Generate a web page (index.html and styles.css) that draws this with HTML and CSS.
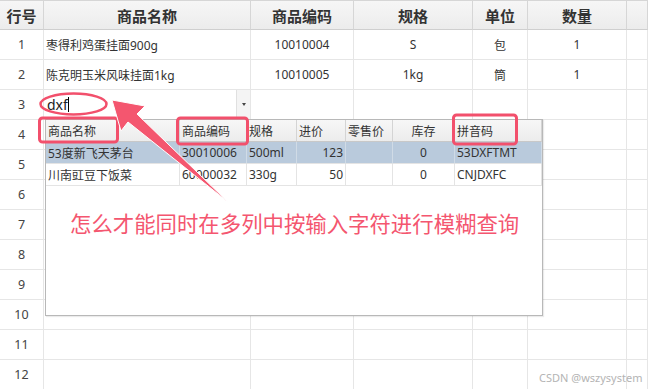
FILE: index.html
```html
<!DOCTYPE html>
<html>
<head lang="zh">
    <meta charset="UTF-8">
    <title>商品明细</title>
    <link rel="stylesheet" href="styles.css">
</head>
<body>
<div class="page">
    <div class="grid">
        <div class="c h">行号</div>
        <div class="c h">商品名称</div>
        <div class="c h">商品编码</div>
        <div class="c h">规格</div>
        <div class="c h">单位</div>
        <div class="c h">数量</div>
        <div class="c h"></div>

        <div class="c n">1</div>
        <div class="c l">枣得利鸡蛋挂面900g</div>
        <div class="c">10010004</div>
        <div class="c">S</div>
        <div class="c">包</div>
        <div class="c">1</div>
        <div class="c"></div>

        <div class="c n">2</div>
        <div class="c l">陈克明玉米风味挂面1kg</div>
        <div class="c">10010005</div>
        <div class="c">1kg</div>
        <div class="c">筒</div>
        <div class="c">1</div>
        <div class="c"></div>

        <div class="c n">3</div>
        <div class="c editor">
            <span class="edit-text">dxf<i class="caret"></i></span>
            <span class="drop-btn"><i class="tri"></i></span>
        </div>
        <div class="c"></div>
        <div class="c"></div>
        <div class="c"></div>
        <div class="c"></div>
        <div class="c"></div>

        <div class="c n">4</div><div class="c"></div><div class="c"></div><div class="c"></div><div class="c"></div><div class="c"></div><div class="c"></div>
        <div class="c n">5</div><div class="c"></div><div class="c"></div><div class="c"></div><div class="c"></div><div class="c"></div><div class="c"></div>
        <div class="c n">6</div><div class="c"></div><div class="c"></div><div class="c"></div><div class="c"></div><div class="c"></div><div class="c"></div>
        <div class="c n">7</div><div class="c"></div><div class="c"></div><div class="c"></div><div class="c"></div><div class="c"></div><div class="c"></div>
        <div class="c n">8</div><div class="c"></div><div class="c"></div><div class="c"></div><div class="c"></div><div class="c"></div><div class="c"></div>
        <div class="c n">9</div><div class="c"></div><div class="c"></div><div class="c"></div><div class="c"></div><div class="c"></div><div class="c"></div>
        <div class="c n">10</div><div class="c"></div><div class="c"></div><div class="c"></div><div class="c"></div><div class="c"></div><div class="c"></div>
        <div class="c n">11</div><div class="c"></div><div class="c"></div><div class="c"></div><div class="c"></div><div class="c"></div><div class="c"></div>
        <div class="c n">12</div><div class="c"></div><div class="c"></div><div class="c"></div><div class="c"></div><div class="c"></div><div class="c"></div>
    </div>

    <!-- 下拉查询面板 -->
    <div class="popup">
        <div class="pgrid">
            <div class="p ph">商品名称</div>
            <div class="p ph">商品编码</div>
            <div class="p ph">规格</div>
            <div class="p ph">进价</div>
            <div class="p ph">零售价</div>
            <div class="p ph ctr">库存</div>
            <div class="p ph">拼音码</div>

            <div class="p sel">53度新飞天茅台</div>
            <div class="p sel">30010006</div>
            <div class="p sel">500ml</div>
            <div class="p sel r">123</div>
            <div class="p sel"></div>
            <div class="p sel ctr">0</div>
            <div class="p sel">53DXFTMT</div>

            <div class="p">川南豇豆下饭菜</div>
            <div class="p">60000032</div>
            <div class="p">330g</div>
            <div class="p r">50</div>
            <div class="p"></div>
            <div class="p ctr">0</div>
            <div class="p">CNJDXFC</div>
        </div>
    </div>

    <svg class="marks" width="648" height="389" viewBox="0 0 648 389">
        <ellipse cx="73.5" cy="104" rx="33" ry="10.5" fill="none" stroke="#f2506c" stroke-width="2.5"/>
        <rect x="39.5" y="118" width="78" height="24" rx="3" fill="none" stroke="#f2506c" stroke-width="3"/>
        <rect x="177.5" y="118" width="70" height="26" rx="3" fill="none" stroke="#f2506c" stroke-width="3"/>
        <rect x="453.5" y="115" width="63" height="29" rx="3" fill="none" stroke="#f2506c" stroke-width="3"/>
        <path d="M112 100 L145 106 L137 114 L228 202 L128 122 L121 131 Z" fill="#f4566f" stroke="#fff" stroke-width="1" stroke-linejoin="round"/>
    </svg>

    <div class="note">怎么才能同时在多列中按输入字符进行模糊查询</div>
    <div class="mark">CSDN @wszysystem</div>
</div>
</body>
</html>
```

FILE: styles.css
```css
*{
    margin: 0;
    padding: 0;
    box-sizing: border-box;
}
body{
    background: #fff;
    font-family: "Noto Sans", "Noto Sans CJK SC", sans-serif;
    color: #333;
}
.page{
    position: relative;
    width: 648px;
    height: 389px;
    overflow: hidden;
}
.grid{
    display: grid;
    grid-template-columns: 44px 207px 103px 119px 55px 99px 21px;
    grid-auto-rows: 30px;
}
.c{
    display: flex;
    align-items: center;
    justify-content: center;
    border-right: 1px solid #e6e6e6;
    border-bottom: 1px solid #e6e6e6;
    font-size: 12px;
    color: #333;
    white-space: nowrap;
}
.c.l{
    justify-content: flex-start;
    padding-left: 2px;
}
.c.n{
    font-size: 12.5px;
    color: #444;
}
.c.h{
    font-size: 15px;
    font-weight: bold;
    color: #333;
    background: linear-gradient(#f6f6f6, #ececec);
    border-top: 1px solid #d6d6d6;
    border-right-color: #d6d6d6;
    border-bottom-color: #cfcfcf;
}
.editor{
    justify-content: space-between;
    padding: 0;
}
.edit-text{
    display: flex;
    align-items: center;
    padding-left: 3px;
    font-size: 14px;
    color: #222;
}
.caret{
    display: inline-block;
    width: 1px;
    height: 15px;
    background: #000;
}
.drop-btn{
    display: flex;
    align-items: center;
    justify-content: center;
    width: 14px;
    height: 29px;
    border-left: 1px solid #e0e0e0;
    background: #f4f4f4;
}
.tri{
    display: block;
    width: 0;
    height: 0;
    border-left: 2.5px solid transparent;
    border-right: 2.5px solid transparent;
    border-top: 3px solid #444;
}
.popup{
    position: absolute;
    left: 45px;
    top: 119px;
    width: 498px;
    height: 197px;
    background: #fff;
    border: 1px solid #b8b8b8;
    box-shadow: 1px 1px 1px rgba(0,0,0,0.08);
}
.pgrid{
    display: grid;
    grid-template-columns: 134px 67px 50px 49px 47px 62px 1fr;
    grid-auto-rows: 22px;
}
.p{
    display: flex;
    align-items: center;
    padding-left: 2px;
    font-size: 12px;
    color: #333;
    border-right: 1px solid #e4e4e4;
    border-bottom: 1px solid #e4e4e4;
    white-space: nowrap;
}
.p.ph{
    background: linear-gradient(#f7f7f7, #ececec);
    border-right-color: #d4d4d4;
    border-bottom-color: #c8c8c8;
}
.p.sel{
    background: #b9cadc;
    border-right-color: #d0dbe6;
}
.p.r{
    justify-content: flex-end;
    padding-right: 2px;
}
.p.ctr{
    justify-content: center;
    padding-left: 0;
}
.marks{
    position: absolute;
    left: 0;
    top: 0;
    pointer-events: none;
}
.note{
    position: absolute;
    left: 70px;
    top: 210px;
    font-family: "Noto Sans CJK SC", sans-serif;
    font-size: 21.4px;
    line-height: 26px;
    color: #f4566f;
    white-space: nowrap;
}
.mark{
    position: absolute;
    left: 539px;
    top: 370px;
    font-size: 11px;
    color: #b4b4b4;
    font-family: "Noto Sans", sans-serif;
    white-space: nowrap;
}
```
